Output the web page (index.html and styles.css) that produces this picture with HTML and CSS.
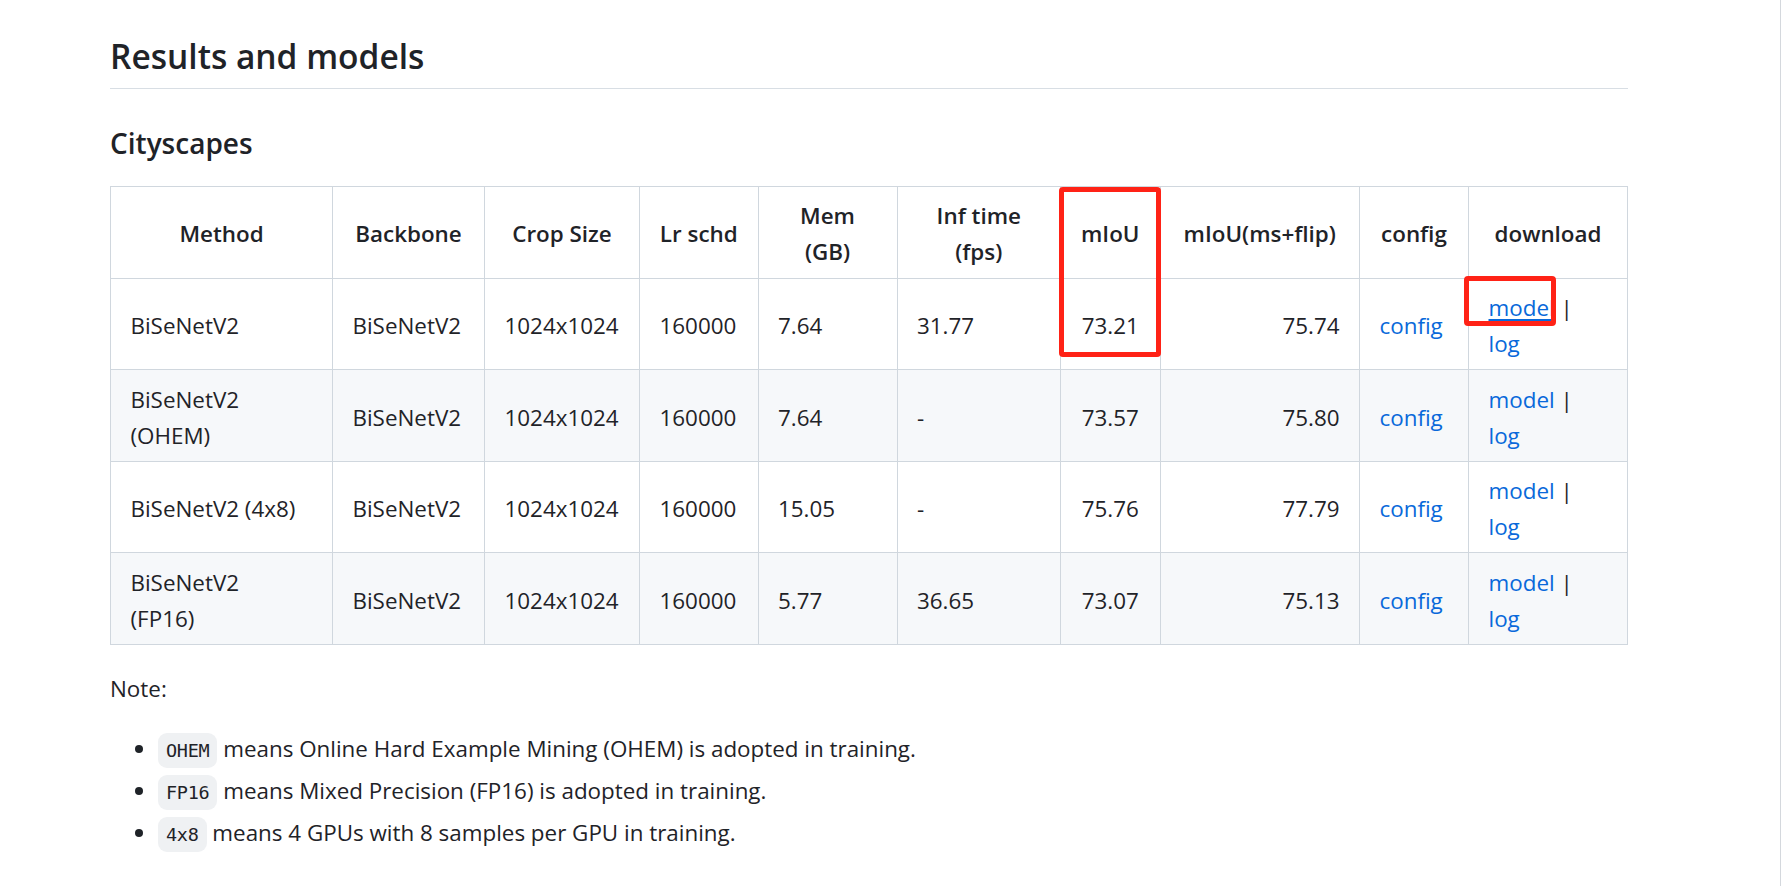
FILE: index.html
```html
<!DOCTYPE html>
<html lang="en">
<head>
<meta charset="utf-8">
<title>Results and models</title>
<link rel="stylesheet" href="styles.css">
</head>
<body>
<div class="page">
  <article class="markdown-body">
    <h2 class="title">Results and models</h2>
    <h3 class="subtitle">Cityscapes</h3>
    <div class="table-wrap">
      <table class="results">
        <colgroup>
          <col class="w-method">
          <col class="w-backbone">
          <col class="w-crop">
          <col class="w-lr">
          <col class="w-mem">
          <col class="w-inf">
          <col class="w-miou">
          <col class="w-flip">
          <col class="w-config">
          <col class="w-dl">
        </colgroup>
        <thead>
          <tr>
            <th>Method</th>
            <th>Backbone</th>
            <th>Crop Size</th>
            <th>Lr schd</th>
            <th>Mem<br>(GB)</th>
            <th>Inf time<br>(fps)</th>
            <th>mIoU</th>
            <th>mIoU(ms+flip)</th>
            <th>config</th>
            <th>download</th>
          </tr>
        </thead>
        <tbody>
          <tr>
            <td>BiSeNetV2</td>
            <td>BiSeNetV2</td>
            <td>1024x1024</td>
            <td>160000</td>
            <td>7.64</td>
            <td>31.77</td>
            <td class="center">73.21</td>
            <td class="right">75.74</td>
            <td><a href="#">config</a></td>
            <td><a href="#" class="hovered">model</a> |<br><a href="#">log</a></td>
          </tr>
          <tr>
            <td>BiSeNetV2<br>(OHEM)</td>
            <td>BiSeNetV2</td>
            <td>1024x1024</td>
            <td>160000</td>
            <td>7.64</td>
            <td>-</td>
            <td class="center">73.57</td>
            <td class="right">75.80</td>
            <td><a href="#">config</a></td>
            <td><a href="#">model</a> |<br><a href="#">log</a></td>
          </tr>
          <tr>
            <td class="nowrap">BiSeNetV2 (4x8)</td>
            <td>BiSeNetV2</td>
            <td>1024x1024</td>
            <td>160000</td>
            <td>15.05</td>
            <td>-</td>
            <td class="center">75.76</td>
            <td class="right">77.79</td>
            <td><a href="#">config</a></td>
            <td><a href="#">model</a> |<br><a href="#">log</a></td>
          </tr>
          <tr>
            <td>BiSeNetV2<br>(FP16)</td>
            <td>BiSeNetV2</td>
            <td>1024x1024</td>
            <td>160000</td>
            <td>5.77</td>
            <td>36.65</td>
            <td class="center">73.07</td>
            <td class="right">75.13</td>
            <td><a href="#">config</a></td>
            <td><a href="#">model</a> |<br><a href="#">log</a></td>
          </tr>
        </tbody>
      </table>
      <span class="annot annot-miou"></span>
      <span class="annot annot-model"></span>
    </div>
    <p class="note">Note:</p>
    <ul class="notes">
      <li><code>OHEM</code> means Online Hard Example Mining (OHEM) is adopted in training.</li>
      <li><code>FP16</code> means Mixed Precision (FP16) is adopted in training.</li>
      <li><code>4x8</code> means 4 GPUs with 8 samples per GPU in training.</li>
    </ul>
  </article>
</div>
</body>
</html>
```

FILE: styles.css
```css
* {
  box-sizing: border-box;
}

html, body {
  margin: 0;
  padding: 0;
  background: #ffffff;
}

body {
  font-family: "Open Sans", "Noto Sans", "Liberation Sans", sans-serif;
  font-size: 22.4px;
  line-height: 36px;
  color: #1f2328;
}

.page {
  width: 1781px;
  min-height: 886px;
  border-right: 1px solid #d4d8dd;
  overflow: hidden;
}

.markdown-body {
  width: 1518px;
  margin-left: 110px;
  padding-top: 33.5px;
}

.title {
  margin: 0 0 36px;
  font-size: 33.5px;
  line-height: 45px;
  font-weight: 600;
  padding-bottom: 9px;
  border-bottom: 1px solid #d8dee4;
}

.subtitle {
  margin: 0 0 24px;
  font-size: 28px;
  line-height: 37.5px;
  font-weight: 600;
}

.table-wrap {
  position: relative;
  margin-bottom: 24px;
}

.results {
  border-collapse: collapse;
  border-spacing: 0;
  table-layout: fixed;
  width: 1517px;
}

.w-method { width: 222px; }
.w-backbone { width: 152px; }
.w-crop { width: 155px; }
.w-lr { width: 118.5px; }
.w-mem { width: 139px; }
.w-inf { width: 163.5px; }
.w-miou { width: 99.5px; }
.w-flip { width: 199.5px; }
.w-config { width: 109px; }
.w-dl { width: 159px; }

.results th,
.results td {
  border: 1px solid #d0d7de;
  padding: 11.5px 19.5px 7px;
  vertical-align: middle;
  text-align: left;
}

.results th {
  font-weight: 600;
  text-align: center;
  padding-top: 10.5px;
  padding-bottom: 8px;
}

.results tbody tr:nth-child(2n) {
  background: #f6f8fa;
}

.results td.center {
  text-align: center;
}

.results td.right {
  text-align: right;
}

.results td.nowrap {
  white-space: nowrap;
}

.results a {
  color: #0969da;
  text-decoration: none;
}

.results a.hovered {
  text-decoration: underline;
  text-decoration-thickness: 2px;
  text-underline-offset: 3px;
}

.annot {
  position: absolute;
  border: 5px solid #ff2216;
  border-radius: 4px;
  pointer-events: none;
}

.annot-miou {
  left: 949px;
  top: 1px;
  width: 102px;
  height: 170px;
}

.annot-model {
  left: 1354px;
  top: 90px;
  width: 92px;
  height: 50px;
}

.note {
  margin: 0 0 24px;
  padding-top: 2px;
}

.notes {
  margin: 0;
  padding-left: 48px;
}

.notes li + li {
  margin-top: 6px;
}

.notes code {
  font-family: "DejaVu Sans Mono", "Liberation Mono", monospace;
  font-size: 18.5px;
  line-height: 1;
  padding: 6.5px 8px 7.5px;
  border-radius: 9px;
  background: #eff1f3;
  color: #1f2328;
  letter-spacing: -0.3px;
}
```
